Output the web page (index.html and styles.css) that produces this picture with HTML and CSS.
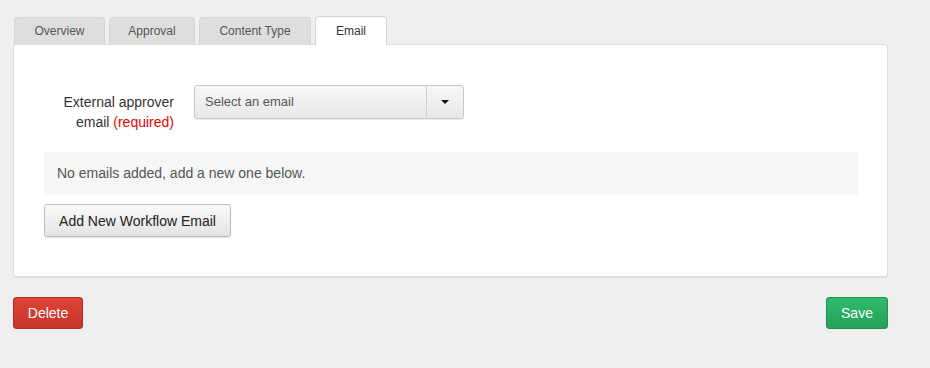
FILE: index.html
```
<!DOCTYPE html>
<html>
<head>
<meta charset="utf-8">
<link rel="stylesheet" href="styles.css">
</head>
<body>
<div class="page">
  <ul class="tabs">
    <li class="tab">Overview</li>
    <li class="tab">Approval</li>
    <li class="tab">Content Type</li>
    <li class="tab active">Email</li>
  </ul>
  <div class="panel">
    <div class="form-row">
      <label class="label"><span class="line">External approver</span><span class="line">email <span class="req">(required)</span></span></label>
      <div class="select">
        <span class="select-text">Select an email</span>
        <span class="select-btn"><span class="caret"></span></span>
      </div>
    </div>
    <div class="empty">No emails added, add a new one below.</div>
    <button class="btn">Add New Workflow Email</button>
  </div>
  <div class="actions">
    <button class="btn-action delete">Delete</button>
    <button class="btn-action save">Save</button>
  </div>
</div>
</body>
</html>
```
FILE: styles.css
```
html, body {
  margin: 0;
  padding: 0;
}
body {
  background: #efefef;
  font-family: "Liberation Sans", Arial, Helvetica, sans-serif;
  color: #333;
}
.page {
  width: 875px;
  padding: 16px 0 0 13px;
}
.tabs {
  list-style: none;
  margin: 0;
  padding: 0 0 0 1px;
  display: flex;
  gap: 4px;
  height: 28px;
  position: relative;
  z-index: 1;
}
.tab {
  box-sizing: border-box;
  height: 28px;
  margin-top: 1px;
  padding: 0;
  text-align: center;
  background: #dedede;
  border: 1px solid #d6d6d6;
  border-bottom: none;
  border-radius: 4px 4px 0 0;
  font-size: 12px;
  line-height: 27px;
  color: #555;
}
.tab:nth-child(1) { width: 91px; }
.tab:nth-child(2) { width: 86px; }
.tab:nth-child(3) { width: 112px; }
.tab.active {
  width: 72px;
  margin-top: 0;
  height: 29px;
  background: #fff;
  border-color: #d4d4d4;
  color: #333;
  line-height: 29px;
}
.panel {
  box-sizing: border-box;
  width: 875px;
  background: #fff;
  border: 1px solid #dcdcdc;
  border-radius: 0 3px 3px 3px;
  box-shadow: 0 1px 1px rgba(0,0,0,0.06);
  padding: 40px 29px 39px 30px;
}
.form-row {
  display: flex;
  align-items: flex-start;
  gap: 20px;
}
.label {
  width: 130px;
  display: flex;
  flex-direction: column;
  align-items: flex-end;
  font-size: 14px;
  line-height: 20px;
  padding-top: 7px;
  color: #333;
}
.line {
  display: block;
  white-space: nowrap;
}
.req {
  color: #e00;
}
.select {
  box-sizing: border-box;
  width: 270px;
  height: 34px;
  display: flex;
  border: 1px solid #c8c8c8;
  border-radius: 3px;
  background: linear-gradient(#f7f7f7, #e8e8e8);
  box-shadow: 0 1px 1px rgba(0,0,0,0.08);
}
.select-text {
  flex: 1;
  padding-left: 10px;
  font-size: 13px;
  line-height: 31px;
  color: #555;
}
.select-btn {
  width: 36px;
  border-left: 1px solid #cfcfcf;
  display: flex;
  align-items: center;
  justify-content: center;
}
.caret {
  width: 0;
  height: 0;
  border-left: 4px solid transparent;
  border-right: 4px solid transparent;
  border-top: 4px solid #111;
}
.empty {
  margin-top: 20px;
  height: 43px;
  background: #f6f6f6;
  padding-left: 13px;
  font-size: 14px;
  line-height: 43px;
  color: #555;
}
.btn {
  display: block;
  margin-top: 9px;
  box-sizing: border-box;
  width: 187px;
  height: 33px;
  border: 1px solid #bbb;
  border-radius: 3px;
  background: linear-gradient(#fafafa, #e4e4e4);
  box-shadow: 0 1px 1px rgba(0,0,0,0.1);
  font-family: "Liberation Sans", Arial, sans-serif;
  font-size: 14px;
  color: #222;
  padding: 0;
}
.actions {
  display: flex;
  justify-content: space-between;
  margin-top: 20px;
}
.btn-action {
  box-sizing: border-box;
  height: 32px;
  border-radius: 3px;
  font-family: "Liberation Sans", Arial, sans-serif;
  font-size: 14px;
  color: #fff;
  padding: 0;
}
.delete {
  width: 70px;
  background: linear-gradient(#de4336, #c8352a);
  border: 1px solid #b52e23;
}
.save {
  width: 62px;
  background: linear-gradient(#2fba6c, #22a35a);
  border: 1px solid #1f9050;
}
```
